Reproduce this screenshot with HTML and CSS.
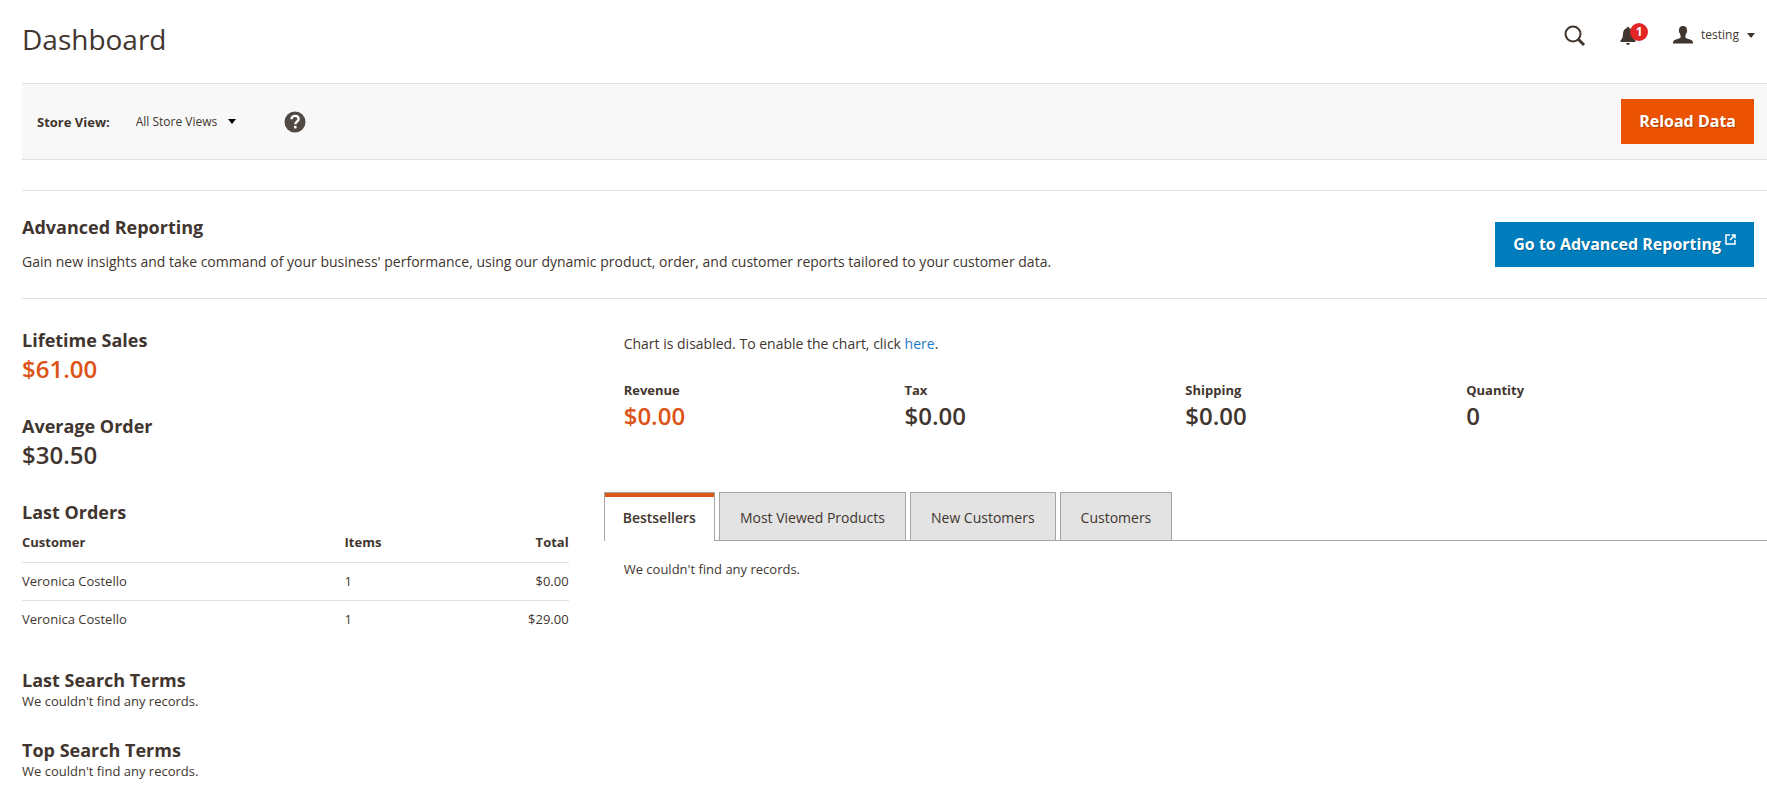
FILE: index.html
```html
<!DOCTYPE html>
<html lang="en">
<head>
<meta charset="utf-8">
<title>Dashboard</title>
<link rel="stylesheet" href="styles.css">
</head>
<body>
<div class="page">
  <header class="page-header">
    <h1 class="page-title">Dashboard</h1>
    <div class="header-tools">
      <button class="tool tool-search" type="button" aria-label="Search">
        <svg width="22" height="22" viewBox="0 0 22 22"><circle cx="9" cy="9" r="7.500" fill="none" stroke="currentColor" stroke-width="2"/><path d="M14.500 14.500l5.500 5.500" stroke="currentColor" stroke-width="3"/></svg>
      </button>
      <button class="tool tool-bell" type="button" aria-label="Notifications">
        <svg width="16" height="18" viewBox="0 0 16 18" fill="currentColor"><path d="M8 0c.8 0 1.300.5 1.400 1.200C12 2 12.800 4 13 7c.2 3.300.8 5 2.500 6.500V15H.5v-1.500C2.200 12 2.800 10.300 3 7c.2-3 1-5 3.600-5.800C6.700.5 7.200 0 8 0zM6 16h4c-.2 1.200-1 2-2 2s-1.800-.8-2-2z"/></svg>
        <span class="badge">1</span>
      </button>
      <button class="tool tool-user" type="button">
        <svg width="20" height="18" viewBox="0 0 20 18" fill="currentColor"><path d="M10 0c2.600 0 4 1.500 4 4 0 .6.200 1 .1 1.700-.1.600-.5.900-.7 1.300C13 8.300 12.600 9 12.400 9.600v2c1 1.200 3.500 1.600 5.300 2.200 1.600.6 2.300 1.700 2.300 3.700H0c0-2 .7-3.100 2.300-3.700 1.800-.6 4.300-1 5.300-2.200v-2C7.400 9 7 8.300 6.600 7c-.2-.4-.6-.7-.7-1.300C5.800 5 6 4.600 6 4c0-2.500 1.400-4 4-4z"/></svg>
        <span>testing</span>
        <svg width="8" height="5" viewBox="0 0 8 5"><path d="M0 0h8L4 5z" fill="currentColor"/></svg>
      </button>
    </div>
  </header>

  <div class="filter-bar">
    <label class="filter-label" for="store">Store View:</label>
    <div class="select-wrap">
      <select id="store" class="store-select"><option>All Store Views</option></select>
      <svg width="8" height="5" viewBox="0 0 8 5"><path d="M0 0h8L4 5z"/></svg>
    </div>
    <a class="help" href="#" aria-label="Help">
      <svg width="22" height="22" viewBox="0 0 22 22"><circle cx="11" cy="11" r="10.500" fill="#514943"/><path d="M7.500 8.300C7.500 6.200 9 4.900 11.100 4.900c2 0 3.500 1.200 3.500 3 0 2.700-3.300 2.700-3.300 5.300" fill="none" stroke="#fff" stroke-width="2.400"/><rect x="9.900" y="14.800" width="2.700" height="2.700" rx="1" fill="#fff"/></svg>
    </a>
    <button class="button button-primary" type="button">Reload Data</button>
  </div>

  <section class="reporting">
    <div>
      <h2 class="heading">Advanced Reporting</h2>
      <p class="reporting-text">Gain new insights and take command of your business' performance, using our dynamic product, order, and customer reports tailored to your customer data.</p>
    </div>
    <a class="button button-link" href="#">Go to Advanced Reporting
      <svg width="11" height="11" viewBox="0 0 11 11" fill="none" stroke="currentColor" stroke-width="1.500"><path d="M5 1H1v9h9V6M6.500 1H10v3.500M10 1L5 6"/></svg>
    </a>
  </section>

  <div class="dashboard">
    <aside class="side">
      <section class="block">
        <h2 class="heading">Lifetime Sales</h2>
        <p class="price accent">$61.00</p>
      </section>
      <section class="block">
        <h2 class="heading">Average Order</h2>
        <p class="price">$30.50</p>
      </section>
      <section class="block">
        <h2 class="heading">Last Orders</h2>
        <table class="orders">
          <thead><tr><th class="col-name">Customer</th><th>Items</th><th class="num">Total</th></tr></thead>
          <tbody>
            <tr><td>Veronica Costello</td><td>1</td><td class="num">$0.00</td></tr>
            <tr><td>Veronica Costello</td><td>1</td><td class="num">$29.00</td></tr>
          </tbody>
        </table>
      </section>
      <section class="block">
        <h2 class="heading">Last Search Terms</h2>
        <p class="empty">We couldn't find any records.</p>
      </section>
      <section class="block">
        <h2 class="heading">Top Search Terms</h2>
        <p class="empty">We couldn't find any records.</p>
      </section>
    </aside>

    <main class="main">
      <p class="chart-note">Chart is disabled. To enable the chart, click <a class="link" href="#">here</a>.</p>
      <div class="totals">
        <div><h3 class="total-label">Revenue</h3><p class="price accent">$0.00</p></div>
        <div><h3 class="total-label">Tax</h3><p class="price">$0.00</p></div>
        <div><h3 class="total-label">Shipping</h3><p class="price">$0.00</p></div>
        <div><h3 class="total-label">Quantity</h3><p class="price">0</p></div>
      </div>
      <div class="tabs" role="tablist">
        <button class="tab tab-active" type="button" role="tab" aria-selected="true">Bestsellers</button>
        <button class="tab" type="button" role="tab">Most Viewed Products</button>
        <button class="tab" type="button" role="tab">New Customers</button>
        <button class="tab" type="button" role="tab">Customers</button>
      </div>
      <p class="empty tab-panel" role="tabpanel">We couldn't find any records.</p>
    </main>
  </div>
</div>
</body>
</html>
```
FILE: styles.css
```css
* { box-sizing: border-box; }
body {
  margin: 0;
  background: #fff;
  color: #41362f;
  font: 400 14px/20px "Open Sans", "Noto Sans", sans-serif;
}
h1, h2, h3, p { margin: 0; }
button, select { font: inherit; color: inherit; border: 0; background: none; padding: 0; border-radius: 0; }
svg { display: block; flex: none; }
.page { padding-left: 22px; }

.page-header {
  display: flex;
  justify-content: space-between;
  align-items: flex-start;
  height: 83px;
  padding: 19px 12px 0 0;
}
.page-title { font-size: 28px; line-height: 40px; font-weight: 400; }
.header-tools { display: flex; align-items: flex-start; padding-top: 6px; }
.tool { display: flex; align-items: center; position: relative; }
.tool-search { margin-right: 34px; }
.tool-bell { height: 22px; margin-right: 37px; }
.badge {
  position: absolute;
  left: 10px;
  top: -2px;
  width: 18px;
  height: 18px;
  border-radius: 50%;
  background: #e22626;
  color: #fff;
  font-size: 12px;
  line-height: 18px;
  font-weight: 700;
  text-align: center;
}
.tool-user { gap: 8px; font-size: 12px; }

.filter-bar {
  display: flex;
  align-items: center;
  padding: 15px 13px 15px 15px;
  background: #f8f8f8;
  border-top: 1px solid #e0e0e0;
  border-bottom: 1px solid #e0e0e0;
}
.filter-label { font-size: 13px; font-weight: 700; margin-right: 26px; }
.select-wrap { display: flex; align-items: center; gap: 10px; }
.store-select { appearance: none; font-size: 12px; line-height: 20px; }
.help { margin-left: 48px; }
.button {
  display: flex;
  height: 45px;
  padding: 0 18px;
  color: #fff;
  font-size: 16px;
  line-height: 44px;
  font-weight: 700;
  text-decoration: none;
  text-shadow: 1px 1px 0 rgba(0, 0, 0, .25);
  white-space: nowrap;
}
.button-primary { margin-left: auto; background: #eb5202; }
.button-link { gap: 4px; background: #007dbd; }
.button-link svg { margin-top: 12px; }

.reporting {
  display: flex;
  justify-content: space-between;
  align-items: flex-start;
  margin-top: 30px;
  padding: 31px 13px 26px 0;
  border-top: 1px solid #e0e0e0;
  border-bottom: 1px solid #e0e0e0;
}
.heading { font-size: 18px; line-height: 24px; font-weight: 700; }
.reporting .heading { margin-top: -7px; }
.reporting-text { margin-top: 13px; }

.dashboard { display: grid; grid-template-columns: 1fr 2fr; }
.side { padding: 29px 35px 0 0; }
.block { margin-bottom: 28px; }
.price { font-size: 24px; line-height: 34px; font-weight: 600; }
.accent { color: #dd5216; }
.orders { width: 100%; margin-bottom: 30px; table-layout: fixed; border-collapse: collapse; font-size: 13px; line-height: 18px; }
.orders th, .orders td { padding: 9px 0 10px; text-align: left; }
.orders th { padding: 9px 0 11px; font-weight: 700; }
.orders tbody tr { border-top: 1px solid #e0e0e0; }
.orders .col-name { width: 59%; }
.orders .num { text-align: right; }
.empty { font-size: 13px; line-height: 18px; }

.main { padding-top: 35px; }
.chart-note { padding-left: 20px; }
.link { color: #1d77c9; text-decoration: none; }
.totals { display: grid; grid-template-columns: repeat(4, 1fr); padding: 27px 20px 59px; }
.total-label { font-size: 13px; line-height: 18px; font-weight: 700; }
.tabs { display: flex; gap: 4px; border-bottom: 1px solid #a5a5a5; }
.tab {
  height: 48px;
  padding: 2px 20px 0;
  background: #e3e3e3;
  border: 1px solid #a5a5a5;
  border-bottom: 0;
  font-size: 14px;
}
.tab-active {
  height: 49px;
  margin-bottom: -1px;
  padding: 2px 18px 0;
  background: #fff;
  box-shadow: inset 0 4px #d85a16;
  font-weight: 600;
}
.tab-panel { padding: 19px 20px; }
```
